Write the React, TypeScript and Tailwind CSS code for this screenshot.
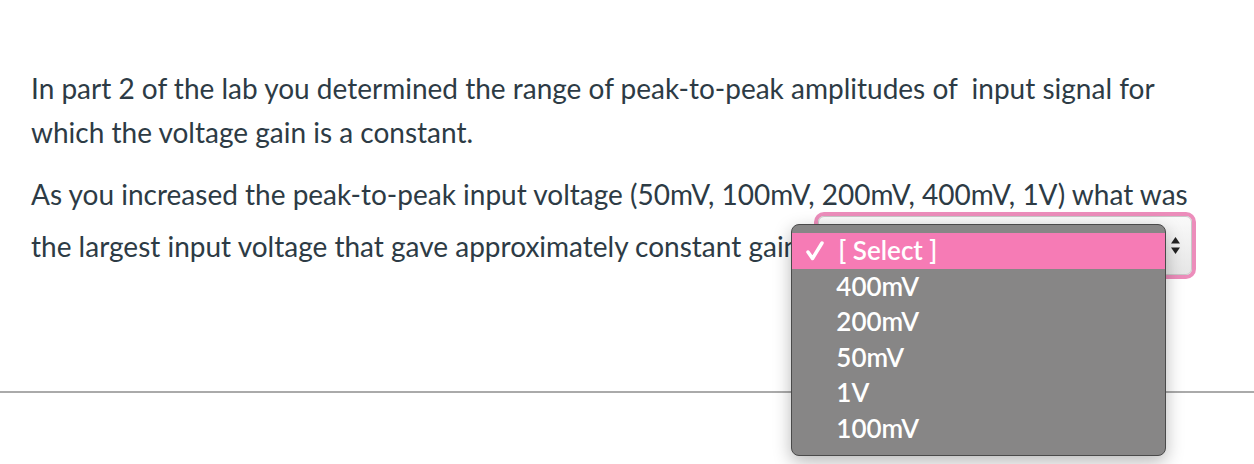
const options = ["400mV", "200mV", "50mV", "1V", "100mV"];

export default function App() {
  return (
    <div className="min-h-[464px] bg-white font-['Lato','Noto_Sans',sans-serif] text-[#2d3b45]">
      <div className="px-[31px] pt-[66px] text-[28px] leading-[44px]">
        <p>
          In part 2 of the lab you determined the range of peak-to-peak amplitudes of&nbsp; input signal for which the
          voltage gain is a constant.
        </p>
        <p className="mt-[18px]">
          As you increased the peak-to-peak input voltage (50mV, 100mV, 200mV, 400mV, 1V) what was the largest input
          voltage that gave approximately constant gain?{" "}
          <span className="relative inline-block h-[59px] w-[374px] align-[-18px] rounded-[6px] border border-[#c8c8c8] bg-gradient-to-b from-[#fafafa] to-[#e6e6e6] shadow-[0_0_0_4px_#ec8dbb]">
            {/* stepper arrows */}
            <svg className="absolute right-[11px] top-[20px]" width="9" height="17" viewBox="0 0 9 17">
              <path d="M4.5 0 L9 6.5 L0 6.5 Z" fill="#222" />
              <path d="M0 10.5 L9 10.5 L4.5 17 Z" fill="#222" />
            </svg>

            {/* open native menu */}
            <span className="absolute left-[-28px] top-[7px] z-10 block h-[232px] w-[375px] overflow-hidden rounded-[8px] border border-[#4a4a4a] bg-[#878686] pt-[8px] text-[26px] font-semibold leading-[35.5px] text-white shadow-[0_6px_18px_rgba(0,0,0,0.28)]">
              <span className="flex h-[35.5px] items-center bg-[#f67bb5]">
                <svg className="ml-[14px] mr-[14px]" width="18" height="20" viewBox="0 0 18 20">
                  <path d="M2 11 L6.5 17.5 L16 2" fill="none" stroke="#fff" strokeWidth="3.5" strokeLinecap="round" strokeLinejoin="round" />
                </svg>
                <span>[ Select ]</span>
              </span>
              {options.map((o) => (
                <span key={o} className="flex h-[35.5px] items-center pl-[44px]">
                  {o}
                </span>
              ))}
            </span>
          </span>
        </p>
      </div>
      <div className="mt-[116px] h-[2px] w-full bg-[#aaaaaa]" />
    </div>
  );
}
